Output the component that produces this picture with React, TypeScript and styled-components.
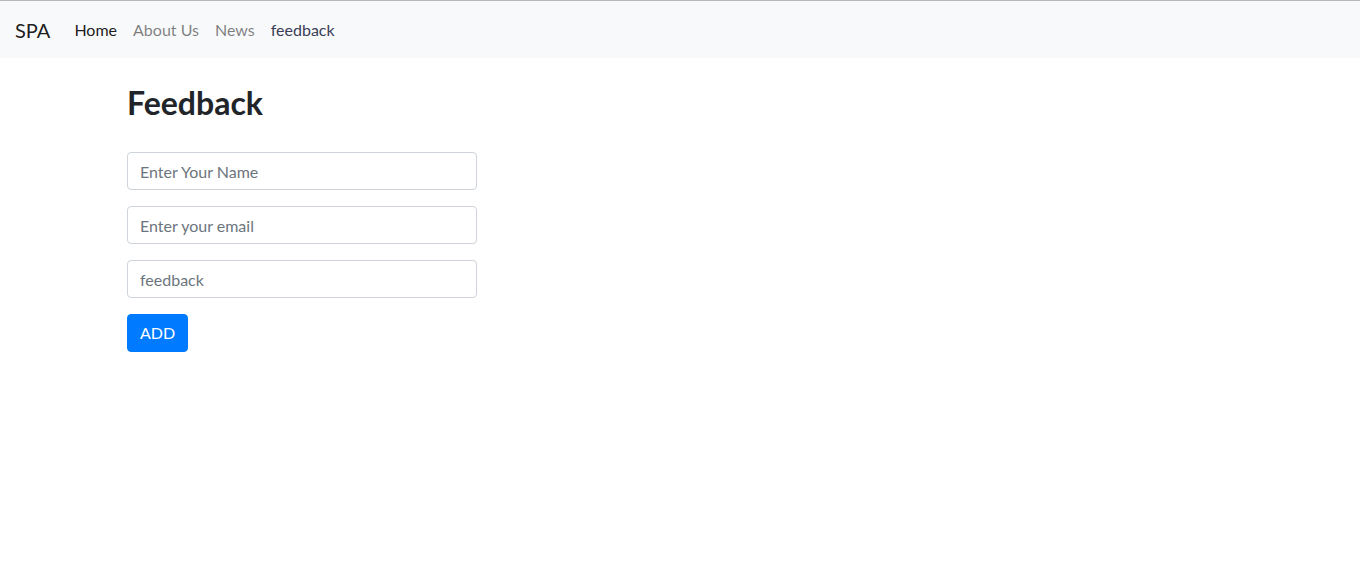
import React from "react";
import styled, { createGlobalStyle } from "styled-components";

const GlobalStyle = createGlobalStyle`
  *, *::before, *::after { box-sizing: border-box; }
  html, body { margin: 0; padding: 0; background: #fff; }
  body {
    font-family: "Segoe UI", Lato, "Open Sans", Arial, sans-serif;
    font-size: 16px;
    line-height: 1.5;
    color: #212529;
    border-top: 1px solid #b9b9b9;
  }
`;

const Navbar = styled.nav`
  display: flex;
  align-items: center;
  height: 57px;
  padding: 8px 16px 8px 15px;
  background: #f8f9fa;
`;

const Brand = styled.a`
  font-size: 20px;
  line-height: 30px;
  color: rgba(0, 0, 0, 0.9);
  text-decoration: none;
  margin-right: 16px;
  padding: 5px 0;
`;

const NavList = styled.div`
  display: flex;
  align-items: center;
`;

const NavLink = styled.a<{ $tone: "active" | "muted" | "visited" }>`
  padding: 8px;
  font-size: 16px;
  line-height: 24px;
  text-decoration: none;
  color: ${(p) =>
    p.$tone === "active"
      ? "rgba(0,0,0,0.9)"
      : p.$tone === "visited"
      ? "#3b3d58"
      : "rgba(0,0,0,0.5)"};
`;

const Container = styled.main`
  max-width: 1136px;
  margin: 0 auto;
  padding: 26px 15px 0;
`;

const Title = styled.h1`
  font-size: 32px;
  font-weight: 700;
  line-height: 1.2;
  margin: 0 0 30px;
  color: #212529;
`;

const Form = styled.form`
  display: flex;
  flex-direction: column;
  align-items: flex-start;
  gap: 16px;
  width: 350px;
`;

const Input = styled.input`
  display: block;
  width: 100%;
  height: 38px;
  padding: 6px 12px;
  font-family: inherit;
  font-size: 16px;
  line-height: 1.5;
  color: #495057;
  background: #fff;
  border: 1px solid #ced4da;
  border-radius: 4px;
  outline: none;
  &::placeholder { color: #6c757d; opacity: 1; }
`;

const Button = styled.button`
  height: 38px;
  padding: 6px 12px;
  font-family: inherit;
  font-size: 16px;
  line-height: 1.5;
  color: #fff;
  background: #007bff;
  border: 1px solid #007bff;
  border-radius: 4px;
  cursor: pointer;
`;

export default function App() {
  return (
    <>
      <GlobalStyle />
      <Navbar>
        <Brand href="#">SPA</Brand>
        <NavList>
          <NavLink href="#" $tone="active">Home</NavLink>
          <NavLink href="#" $tone="muted">About Us</NavLink>
          <NavLink href="#" $tone="muted">News</NavLink>
          <NavLink href="#" $tone="visited">feedback</NavLink>
        </NavList>
      </Navbar>
      <Container>
        <Title>Feedback</Title>
        <Form onSubmit={(e) => e.preventDefault()}>
          <Input type="text" placeholder="Enter Your Name" />
          <Input type="email" placeholder="Enter your email" />
          <Input type="text" placeholder="feedback" />
          <Button type="submit">ADD</Button>
        </Form>
      </Container>
    </>
  );
}
